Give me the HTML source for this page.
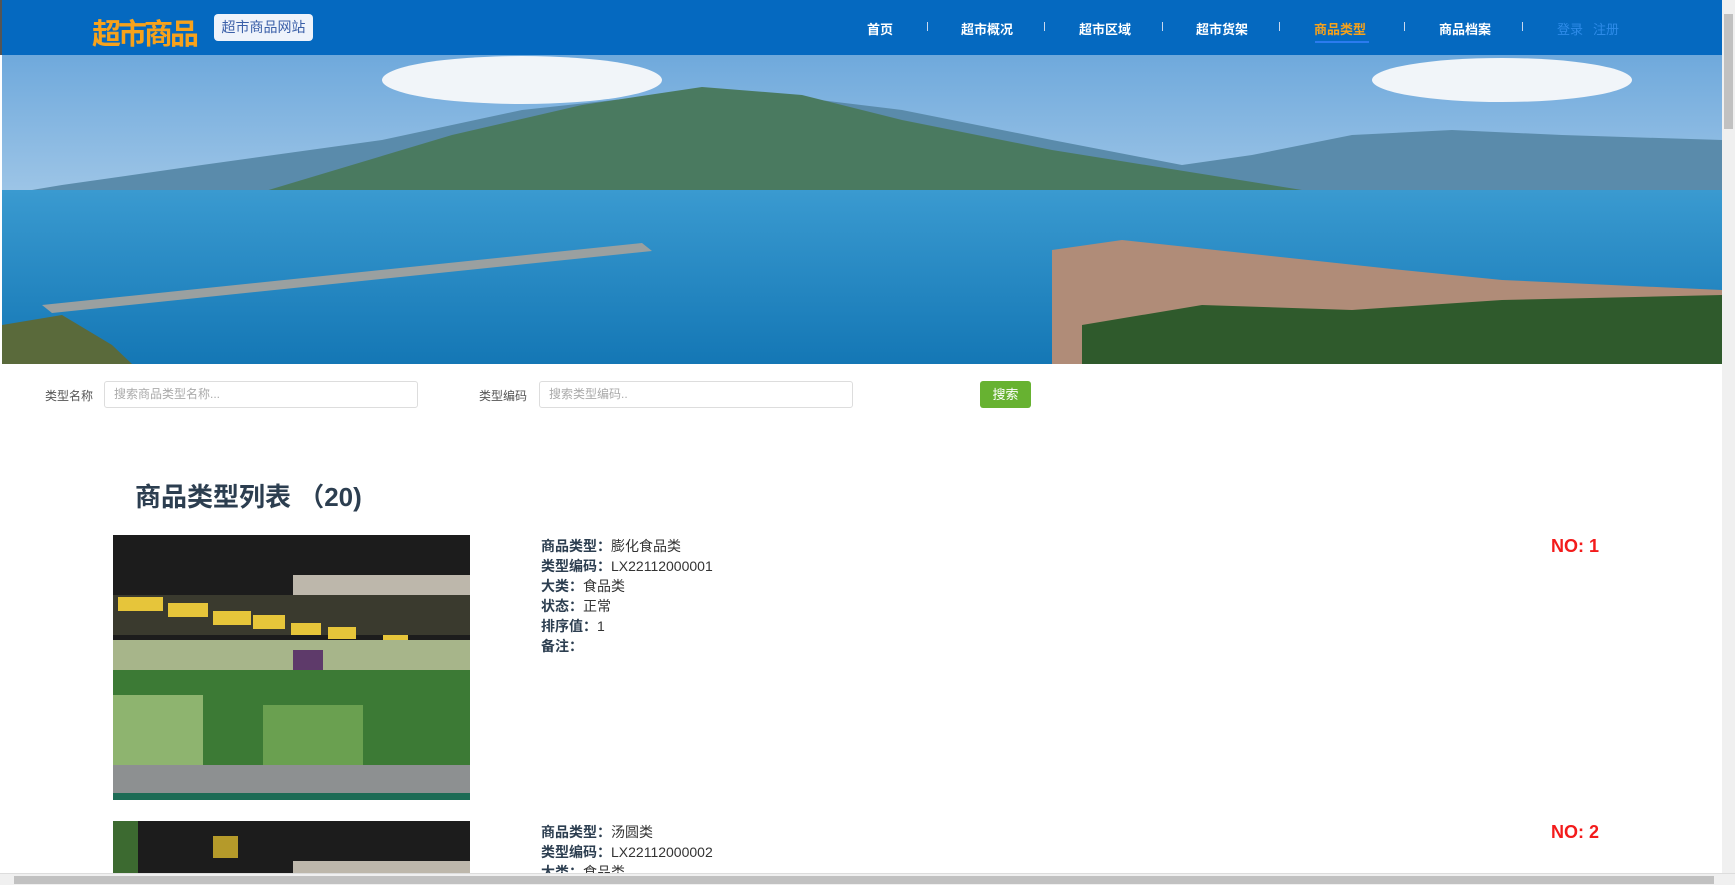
<!DOCTYPE html>
<html><head><meta charset="utf-8"><style>
*{margin:0;padding:0;box-sizing:border-box}
body{width:1735px;height:885px;overflow:hidden;background:#fff;font-family:"Liberation Sans","Noto Sans CJK SC",sans-serif;position:relative}
.hdr{position:absolute;left:0;top:0;width:1722px;height:55px;background:#0569c0;border-left:2px solid #555}
.logo{position:absolute;left:90px;top:11px;color:#f7a21b;font-size:29px;font-weight:bold;letter-spacing:-3px;font-family:"WenQuanYi Zen Hei","Noto Sans CJK SC",sans-serif}
.badge{position:absolute;left:212px;top:14px;width:99px;height:27px;background:#eef3fb;border-radius:4px;color:#3a5fa8;font-size:14px;line-height:27px;text-align:center}
.nav{position:absolute;top:19px;color:#fff;font-size:13px;font-weight:bold}
.sep{position:absolute;top:22px;width:1px;height:9px;background:#c9d8ee}
.act{color:#f7a21b}
.ul{position:absolute;left:1315px;top:41px;width:54px;height:2px;background:#2b7bef}
.lk{position:absolute;top:19px;color:#2e8be8;font-size:13px}
.banner{position:absolute;left:2px;top:55px;width:1720px;height:309px}
.lbl{position:absolute;top:387px;font-size:12px;color:#555}
.inp{position:absolute;top:381px;height:27px;border:1px solid #ddd;border-radius:3px;font-size:12px;color:#aaa;padding-left:9px;line-height:25px}
.btn{position:absolute;left:980px;top:381px;width:51px;height:27px;background:#67b231;color:#fff;border-radius:3px;font-size:13px;text-align:center;line-height:27px}
.title{position:absolute;left:135px;top:477px;font-size:26px;font-weight:bold;color:#2c3e50}
.info{position:absolute;left:541px;font-size:14px;color:#333;line-height:20px}
.info b{color:#2c3e50}
.no{position:absolute;left:1551px;font-size:18px;font-weight:bold;color:#f31b1b}
.vs{position:absolute;left:1722px;top:0;width:13px;height:873px;background:#f0f0f0}
.hs{position:absolute;left:0;top:873px;width:1735px;height:12px;background:#f0f0f0;border-top:1px solid #ddd}
</style></head><body>
<div class="hdr">
<div class="logo">超市商品</div>
<div class="badge">超市商品网站</div>
</div>
<div class="nav" style="left:867px">首页</div>
<div class="sep" style="left:927px"></div>
<div class="nav" style="left:961px">超市概况</div>
<div class="sep" style="left:1044px"></div>
<div class="nav" style="left:1079px">超市区域</div>
<div class="sep" style="left:1162px"></div>
<div class="nav" style="left:1196px">超市货架</div>
<div class="sep" style="left:1279px"></div>
<div class="nav act" style="left:1314px">商品类型</div>
<div class="ul"></div>
<div class="sep" style="left:1404px"></div>
<div class="nav" style="left:1439px">商品档案</div>
<div class="sep" style="left:1522px"></div>
<div class="lk" style="left:1557px">登录</div>
<div class="lk" style="left:1593px">注册</div>
<svg class="banner" viewBox="0 0 1720 309" preserveAspectRatio="none">
<defs><linearGradient id="sk" x1="0" y1="0" x2="0" y2="1"><stop offset="0" stop-color="#6fa9dc"/><stop offset="1" stop-color="#d6e7f3"/></linearGradient>
<linearGradient id="se" x1="0" y1="0" x2="0" y2="1"><stop offset="0" stop-color="#3a9ad0"/><stop offset="1" stop-color="#1477b5"/></linearGradient></defs>
<rect width="1720" height="309" fill="url(#sk)"/>
<ellipse cx="520" cy="25" rx="140" ry="24" fill="#f1f5f9"/>
<ellipse cx="1500" cy="25" rx="130" ry="22" fill="#f1f5f9"/>
<path d="M60 130 L200 110 L380 85 L520 55 L640 42 L760 38 L900 55 L1050 85 L1180 110 L1250 100 L1350 80 L1450 75 L1560 80 L1720 85 L1720 140 L0 140Z" fill="#5a8bab"/>
<path d="M250 140 L450 80 L580 50 L700 32 L800 40 L900 65 L1050 95 L1300 135Z" fill="#4a7a60"/>
<rect y="135" width="1720" height="174" fill="url(#se)"/>
<path d="M40 250 L640 188 L650 196 L50 258Z" fill="#9aa0a0"/>
<path d="M1050 195 L1120 185 L1260 200 L1400 215 L1500 225 L1720 235 L1720 309 L1050 309Z" fill="#b08c78"/>
<path d="M1080 270 L1200 250 L1350 255 L1500 245 L1720 240 L1720 309 L1080 309Z" fill="#2f5a2c"/>
<path d="M0 270 L60 260 L110 290 L130 309 L0 309Z" fill="#5a6a3b"/>
</svg>
<div class="lbl" style="left:45px">类型名称</div>
<div class="inp" style="left:104px;width:314px">搜索商品类型名称...</div>
<div class="lbl" style="left:479px">类型编码</div>
<div class="inp" style="left:539px;width:314px">搜索类型编码..</div>
<div class="btn">搜索</div>
<div class="title">商品类型列表 （20)</div>

<svg style="position:absolute;left:113px;top:535px" width="357" height="265" viewBox="0 0 357 265" preserveAspectRatio="none">
<rect width="357" height="265" fill="#1c1c1c"/>
<rect x="180" y="40" width="177" height="60" fill="#bdb7ab"/>
<rect y="60" width="357" height="40" fill="#3a3a2e"/>
<g fill="#e6c53a"><rect x="5" y="62" width="45" height="14"/><rect x="55" y="68" width="40" height="14"/><rect x="100" y="76" width="38" height="14"/><rect x="140" y="80" width="32" height="14"/><rect x="178" y="88" width="30" height="12"/><rect x="215" y="92" width="28" height="12"/><rect x="270" y="100" width="25" height="10"/><rect x="305" y="108" width="22" height="10"/></g>
<rect y="105" width="357" height="30" fill="#a7b58a"/>
<rect x="180" y="115" width="30" height="20" fill="#5e3a6a"/>
<rect y="135" width="357" height="100" fill="#3c7a35"/>
<rect y="160" width="90" height="75" fill="#8eb46f"/>
<rect x="150" y="170" width="100" height="60" fill="#6aa050"/>
<rect y="230" width="357" height="30" fill="#8d9091"/>
<rect y="258" width="357" height="7" fill="#1d6b55"/>
</svg>
<div class="info" style="top:536px"><b>商品类型：</b>膨化食品类<br><b>类型编码：</b>LX22112000001<br><b>大类：</b>食品类<br><b>状态：</b>正常<br><b>排序值：</b>1<br><b>备注：</b></div>
<div class="no" style="top:536px">NO: 1</div>

<svg style="position:absolute;left:113px;top:821px" width="357" height="52" viewBox="0 0 357 52" preserveAspectRatio="none">
<rect width="357" height="52" fill="#1c1c1c"/>
<rect x="180" y="40" width="177" height="12" fill="#bdb7ab"/>
<rect x="100" y="15" width="25" height="22" fill="#b59a2a"/>
<rect x="0" y="0" width="25" height="52" fill="#3c6a30"/>
</svg>
<div class="info" style="top:822px"><b>商品类型：</b>汤圆类<br><b>类型编码：</b>LX22112000002<br><b>大类：</b>食品类</div>
<div class="no" style="top:822px">NO: 2</div>

<div class="vs"><div style="position:absolute;left:2px;top:14px;width:9px;height:115px;background:#c1c1c1"></div></div>
<div class="hs"><div style="position:absolute;left:14px;top:2px;width:1700px;height:8px;background:#c1c1c1"></div></div>
</body></html>
